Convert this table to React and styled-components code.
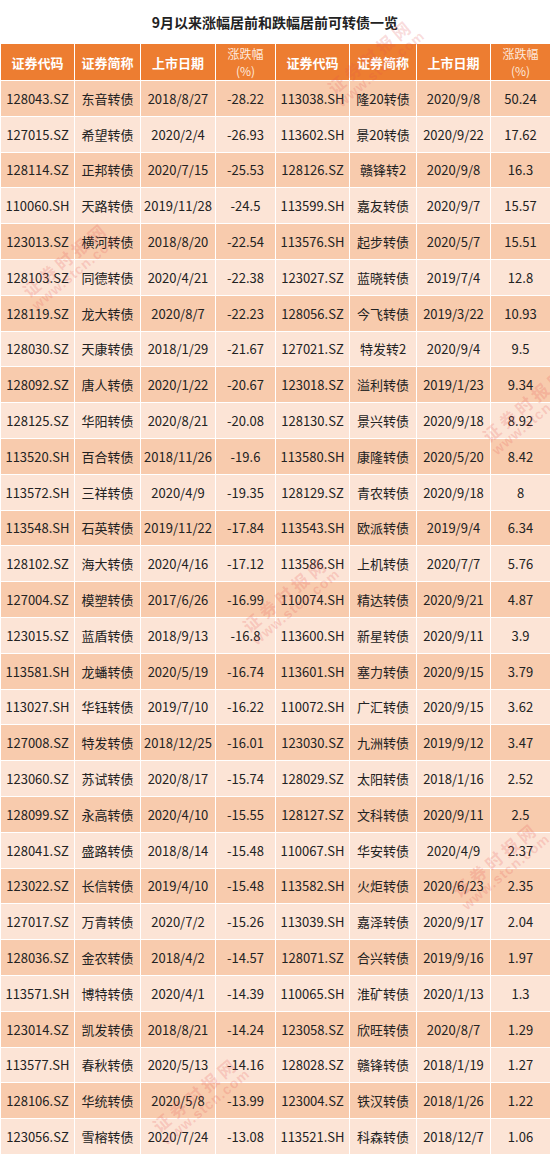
import React from 'react'
import styled, { createGlobalStyle } from 'styled-components'

const GlobalStyle = createGlobalStyle`
  html, body {
    margin: 0;
    padding: 0;
    background: #fff;
  }
  body {
    font-family: "Noto Sans CJK SC", "Noto Sans", sans-serif;
    color: #222;
  }
`

const columns = [74, 66, 75, 60, 74, 67, 74, 60]

const headers = ['证券代码', '证券简称', '上市日期', null, '证券代码', '证券简称', '上市日期', null]

const rows = [
  ['128043.SZ', '东音转债', '2018/8/27', '-28.22', '113038.SH', '隆20转债', '2020/9/8', '50.24'],
  ['127015.SZ', '希望转债', '2020/2/4', '-26.93', '113602.SH', '景20转债', '2020/9/22', '17.62'],
  ['128114.SZ', '正邦转债', '2020/7/15', '-25.53', '128126.SZ', '赣锋转2', '2020/9/8', '16.3'],
  ['110060.SH', '天路转债', '2019/11/28', '-24.5', '113599.SH', '嘉友转债', '2020/9/7', '15.57'],
  ['123013.SZ', '横河转债', '2018/8/20', '-22.54', '113576.SH', '起步转债', '2020/5/7', '15.51'],
  ['128103.SZ', '同德转债', '2020/4/21', '-22.38', '123027.SZ', '蓝晓转债', '2019/7/4', '12.8'],
  ['128119.SZ', '龙大转债', '2020/8/7', '-22.23', '128056.SZ', '今飞转债', '2019/3/22', '10.93'],
  ['128030.SZ', '天康转债', '2018/1/29', '-21.67', '127021.SZ', '特发转2', '2020/9/4', '9.5'],
  ['128092.SZ', '唐人转债', '2020/1/22', '-20.67', '123018.SZ', '溢利转债', '2019/1/23', '9.34'],
  ['128125.SZ', '华阳转债', '2020/8/21', '-20.08', '128130.SZ', '景兴转债', '2020/9/18', '8.92'],
  ['113520.SH', '百合转债', '2018/11/26', '-19.6', '113580.SH', '康隆转债', '2020/5/20', '8.42'],
  ['113572.SH', '三祥转债', '2020/4/9', '-19.35', '128129.SZ', '青农转债', '2020/9/18', '8'],
  ['113548.SH', '石英转债', '2019/11/22', '-17.84', '113543.SH', '欧派转债', '2019/9/4', '6.34'],
  ['128102.SZ', '海大转债', '2020/4/16', '-17.12', '113586.SH', '上机转债', '2020/7/7', '5.76'],
  ['127004.SZ', '模塑转债', '2017/6/26', '-16.99', '110074.SH', '精达转债', '2020/9/21', '4.87'],
  ['123015.SZ', '蓝盾转债', '2018/9/13', '-16.8', '113600.SH', '新星转债', '2020/9/11', '3.9'],
  ['113581.SH', '龙蟠转债', '2020/5/19', '-16.74', '113601.SH', '塞力转债', '2020/9/15', '3.79'],
  ['113027.SH', '华钰转债', '2019/7/10', '-16.22', '110072.SH', '广汇转债', '2020/9/15', '3.62'],
  ['127008.SZ', '特发转债', '2018/12/25', '-16.01', '123030.SZ', '九洲转债', '2019/9/12', '3.47'],
  ['123060.SZ', '苏试转债', '2020/8/17', '-15.74', '128029.SZ', '太阳转债', '2018/1/16', '2.52'],
  ['128099.SZ', '永高转债', '2020/4/10', '-15.55', '128127.SZ', '文科转债', '2020/9/11', '2.5'],
  ['128041.SZ', '盛路转债', '2018/8/14', '-15.48', '110067.SH', '华安转债', '2020/4/9', '2.37'],
  ['123022.SZ', '长信转债', '2019/4/10', '-15.48', '113582.SH', '火炬转债', '2020/6/23', '2.35'],
  ['127017.SZ', '万青转债', '2020/7/2', '-15.26', '113039.SH', '嘉泽转债', '2020/9/17', '2.04'],
  ['128036.SZ', '金农转债', '2018/4/2', '-14.57', '128071.SZ', '合兴转债', '2019/9/16', '1.97'],
  ['113571.SH', '博特转债', '2020/4/1', '-14.39', '110065.SH', '淮矿转债', '2020/1/13', '1.3'],
  ['123014.SZ', '凯发转债', '2018/8/21', '-14.24', '123058.SZ', '欣旺转债', '2020/8/7', '1.29'],
  ['113577.SH', '春秋转债', '2020/5/13', '-14.16', '128028.SZ', '赣锋转债', '2018/1/19', '1.27'],
  ['128106.SZ', '华统转债', '2020/5/8', '-13.99', '123004.SZ', '铁汉转债', '2018/1/26', '1.22'],
  ['123056.SZ', '雪榕转债', '2020/7/24', '-13.08', '113521.SH', '科森转债', '2018/12/7', '1.06'],
]

// 水印位置 (中心点)
const marks = [
  { x: 375, y: 62 },
  { x: 70, y: 265 },
  { x: 530, y: 410 },
  { x: 290, y: 600 },
  { x: 500, y: 865 },
  { x: 200, y: 1100 },
]

const App = () => {
  return (
    <Page>
      <GlobalStyle />
      <Title>9月以来涨幅居前和跌幅居前可转债一览</Title>
      <Table>
        <colgroup>
          {columns.map((w, i) => (
            <col key={i} style={{ width: w }} />
          ))}
        </colgroup>
        <thead>
          <tr>
            {headers.map((h, i) =>
              h ? (
                <HeadCell key={i}>{h}</HeadCell>
              ) : (
                <HeadCell key={i} $light>
                  涨跌幅
                  <br />
                  (%)
                </HeadCell>
              )
            )}
          </tr>
        </thead>
        <tbody>
          {rows.map((row, r) => (
            <Row key={r} $dark={r % 2 === 0}>
              {row.map((cell, c) => (
                <Cell key={c}>{cell}</Cell>
              ))}
            </Row>
          ))}
        </tbody>
      </Table>
      {marks.map((m, i) => (
        <Watermark key={i} style={{ left: m.x, top: m.y }}>
          <MarkCn>证券时报网</MarkCn>
          <MarkEn>www.stcn.com</MarkEn>
        </Watermark>
      ))}
    </Page>
  )
}

const Page = styled.div`
  position: relative;
  width: 550px;
  height: 1155px;
  overflow: hidden;
  background: #fff;
`

const Title = styled.div`
  height: 44px;
  display: flex;
  align-items: center;
  justify-content: center;
  font-size: 14px;
  font-weight: bold;
  color: #222;
`

// 表格
const Table = styled.table`
  width: 550px;
  table-layout: fixed;
  border-collapse: collapse;
  text-align: center;
`

const HeadCell = styled.th`
  height: 36px;
  padding: 0;
  background: #ed7d31;
  color: ${({ $light }) => ($light ? '#fde9dc' : '#fff')};
  font-size: ${({ $light }) => ($light ? '12px' : '13px')};
  font-weight: ${({ $light }) => ($light ? 'normal' : 'bold')};
  line-height: ${({ $light }) => ($light ? '17px' : 'normal')};
  border: 1px solid #fff;
  border-top: none;
`

const Row = styled.tr`
  height: 35.8px;
  background: ${({ $dark }) => ($dark ? '#f8cbad' : '#fce4d6')};
`

const Cell = styled.td`
  padding: 0;
  font-size: 13px;
  color: #222;
  border: 1px solid #fff;
  white-space: nowrap;
`

const Watermark = styled.div`
  position: absolute;
  transform: translate(-50%, -50%) rotate(-40deg);
  display: flex;
  flex-direction: column;
  align-items: center;
  pointer-events: none;
  color: rgba(228, 78, 78, 0.2);
  line-height: 1.05;
`

const MarkCn = styled.span`
  font-size: 17px;
  font-weight: bold;
  letter-spacing: 4px;
`

const MarkEn = styled.span`
  font-family: "Liberation Sans", Arial, sans-serif;
  font-size: 14px;
  font-weight: bold;
  letter-spacing: 1px;
`

export default App
